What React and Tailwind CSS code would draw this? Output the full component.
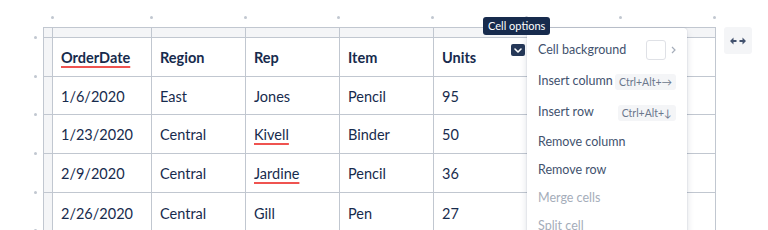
import React from 'react';

const columns = ['OrderDate', 'Region', 'Rep', 'Item', 'Units', '', ''];

const rows = [
  ['1/6/2020', 'East', 'Jones', 'Pencil', '95', '', ''],
  ['1/23/2020', 'Central', 'Kivell', 'Binder', '50', '', ''],
  ['2/9/2020', 'Central', 'Jardine', 'Pencil', '36', '', ''],
  ['2/26/2020', 'Central', 'Gill', 'Pen', '27', '', ''],
];

// words the spellchecker flags
const flagged = ['OrderDate', 'Kivell', 'Jardine'];

const colWidths = ['w-[99px]', 'w-[94px]', 'w-[94px]', 'w-[94px]', 'w-[94px]', 'w-[94px]', 'w-[94px]'];
const rowHeights = ['h-[38px]', 'h-[39px]', 'h-[39px]', 'h-[40px]'];

const topDots = [52, 151, 245, 338, 432, 526, 620, 714];
const leftDots = [37, 76, 114, 153, 192, 230];

function CellText({ text, bold }) {
  const isFlagged = flagged.includes(text);
  return (
    <span
      className={
        (bold ? 'font-bold ' : '') +
        (isFlagged ? 'underline decoration-[#ef5350] decoration-2 underline-offset-[3px]' : '')
      }
    >
      {text}
    </span>
  );
}

function Shortcut({ children }) {
  return (
    <span className="whitespace-nowrap rounded-[3px] bg-[#f4f5f7] px-[4px] text-[10.5px] leading-[16px] text-[#6b778c]">
      {children}
    </span>
  );
}

function MenuItem({ label, disabled, right, height }) {
  return (
    <div
      className={
        'flex items-center justify-between whitespace-nowrap pl-[11px] pr-[11px] ' +
        height +
        ' ' +
        (disabled ? 'text-[#a5adba]' : 'text-[#42526e]')
      }
    >
      <span>{label}</span>
      {right}
    </div>
  );
}

function CellOptionsMenu() {
  return (
    <div className="absolute left-[527px] top-[28px] w-[160px] rounded-[3px] bg-white pb-1 pt-[6px] text-[12.5px] shadow-[0_4px_8px_-2px_rgba(9,30,66,0.25),0_0_1px_rgba(9,30,66,0.31)]">
      <MenuItem
        height="h-[32px]"
        label="Cell background"
        right={
          <span className="flex items-center gap-[5px]">
            <span className="h-[20px] w-[20px] rounded-[3px] border border-[#dfe1e6] bg-white" />
            <svg width="5" height="8" viewBox="0 0 5 8" fill="none">
              <path d="M1 1l3 3-3 3" stroke="#a5adba" strokeWidth="1.2" />
            </svg>
          </span>
        }
      />
      <MenuItem label="Insert column" height="h-[31px]" right={<Shortcut>Ctrl+Alt+→</Shortcut>} />
      <MenuItem label="Insert row" height="h-[31px]" right={<Shortcut>Ctrl+Alt+↓</Shortcut>} />
      <MenuItem label="Remove column" height="h-[28px]" />
      <MenuItem label="Remove row" height="h-[28px]" />
      <MenuItem label="Merge cells" height="h-[28px]" disabled />
      <MenuItem label="Split cell" height="h-[28px]" disabled />
    </div>
  );
}

export default function App() {
  return (
    <div
      className="relative h-[230px] w-[768px] overflow-hidden bg-white text-[#172b4d]"
      style={{ fontFamily: 'Lato, "Noto Sans", sans-serif' }}
    >
      {/* insertion dots */}
      {topDots.map((x) => (
        <span
          key={'t' + x}
          className="absolute top-[16px] h-[3px] w-[3px] rounded-full bg-[#c1c7d0]"
          style={{ left: x - 1 }}
        />
      ))}
      {leftDots.map((y) => (
        <span
          key={'l' + y}
          className="absolute left-[34px] h-[3px] w-[3px] rounded-full bg-[#c1c7d0]"
          style={{ top: y - 1 }}
        />
      ))}

      <div className="flex pl-[43px] pt-[27px]">
        {/* table */}
        <div className="flex flex-col border-l border-t border-[#c1c7d0] text-[14.5px]">
          {/* column controls */}
          <div className="flex h-[10px]">
            <div className="w-[9px] shrink-0 border-b border-r border-[#c1c7d0] bg-[#f4f5f7]" />
            {colWidths.map((w, i) => (
              <div key={i} className={w + ' shrink-0 border-b border-r border-[#c1c7d0] bg-[#f4f5f7]'} />
            ))}
          </div>
          {/* header */}
          <div className="flex h-[39px]">
            <div className="w-[9px] shrink-0 border-b border-r border-[#c1c7d0] bg-[#f4f5f7]" />
            {columns.map((c, i) => (
              <div
                key={i}
                className={colWidths[i] + ' relative flex shrink-0 items-center border-b border-r border-[#c1c7d0] pl-2 pt-[1px]'}
              >
                <CellText text={c} bold />
                {c === 'Units' && (
                  <span className="absolute right-[2px] top-[6px] flex h-[12px] w-[14px] items-center justify-center rounded-[2px] bg-[#253858]">
                    <svg width="8" height="5" viewBox="0 0 8 5" fill="none">
                      <path d="M1 1l3 3 3-3" stroke="white" strokeWidth="1.6" strokeLinecap="round" strokeLinejoin="round" />
                    </svg>
                  </span>
                )}
              </div>
            ))}
          </div>
          {/* body */}
          {rows.map((r, ri) => (
            <div key={ri} className={'flex ' + rowHeights[ri]}>
              <div className="w-[9px] shrink-0 border-b border-r border-[#c1c7d0] bg-[#f4f5f7]" />
              {r.map((v, ci) => (
                <div
                  key={ci}
                  className={colWidths[ci] + ' flex shrink-0 items-center border-b border-r border-[#c1c7d0] pl-2 pt-[2px]'}
                >
                  <CellText text={v} />
                </div>
              ))}
            </div>
          ))}
        </div>

        {/* layout toggle */}
        <button className="ml-[8px] flex h-[27px] w-[28px] items-center justify-center rounded-[3px] bg-[#f4f5f7]">
          <svg width="16" height="8" viewBox="0 0 16 8" fill="#42526e">
            <path d="M0 4l3.5-3.5v2.5h3v2h-3v2.5z" />
            <path d="M16 4l-3.5-3.5v2.5h-3v2h3v2.5z" />
          </svg>
        </button>
      </div>

      <CellOptionsMenu />

      {/* tooltip */}
      <div className="absolute left-[483px] top-[17px] rounded-[3px] bg-[#172b4d] px-[5px] text-[11px] leading-[18px] text-white">
        Cell options
      </div>
    </div>
  );
}
